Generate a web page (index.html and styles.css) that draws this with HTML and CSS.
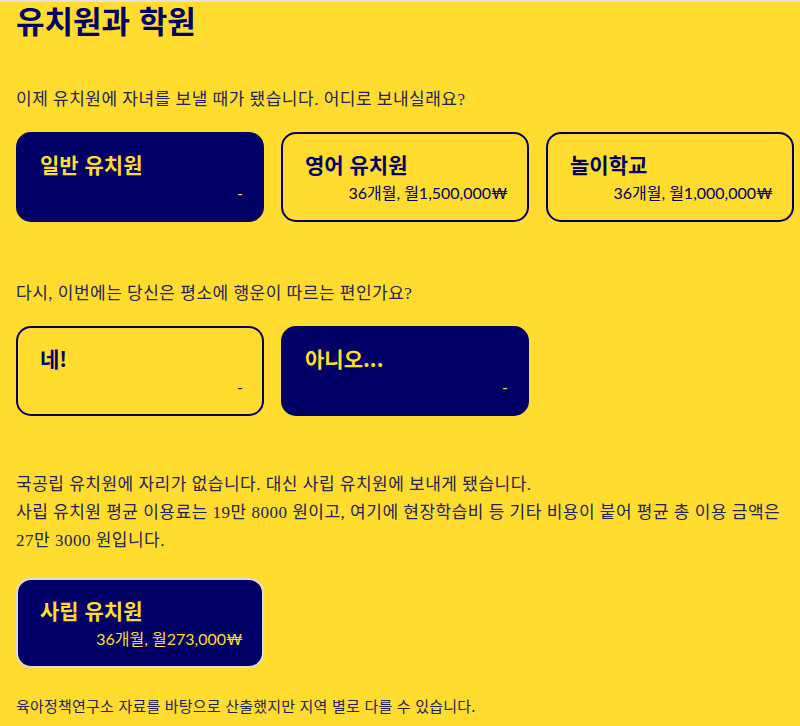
FILE: index.html
```html
<!DOCTYPE html>
<html lang="ko">

<head>
    <meta charset="UTF-8">
    <meta name="viewport" content="width=device-width, initial-scale=1">
    <title>유치원과 학원</title>
    <link rel="stylesheet" href="styles.css">
</head>

<body>
    <div class="pagina">
        <h1 class="titulo">유치원과 학원</h1>

        <p class="pergunta">이제 유치원에 자녀를 보낼 때가 됐습니다. 어디로 보내실래요?</p>
        <div class="opcoes">
            <div class="opcao escolhida">
                <span class="opcao-nome">일반 유치원</span>
                <span class="opcao-valor">-</span>
            </div>
            <div class="opcao">
                <span class="opcao-nome">영어 유치원</span>
                <span class="opcao-valor">36개월, 월1,500,000₩</span>
            </div>
            <div class="opcao">
                <span class="opcao-nome">놀이학교</span>
                <span class="opcao-valor">36개월, 월1,000,000₩</span>
            </div>
        </div>

        <p class="pergunta">다시, 이번에는 당신은 평소에 행운이 따르는 편인가요?</p>
        <div class="opcoes">
            <div class="opcao">
                <span class="opcao-nome">네!</span>
                <span class="opcao-valor">-</span>
            </div>
            <div class="opcao escolhida">
                <span class="opcao-nome">아니오...</span>
                <span class="opcao-valor">-</span>
            </div>
        </div>

        <p class="resultado">국공립 유치원에 자리가 없습니다. 대신 사립 유치원에 보내게 됐습니다.<br>사립 유치원 평균 이용료는 19만 8000 원이고, 여기에 현장학습비 등 기타 비용이 붙어 평균 총 이용 금액은 27만 3000 원입니다.</p>
        <div class="opcoes">
            <div class="opcao final">
                <span class="opcao-nome">사립 유치원</span>
                <span class="opcao-valor">36개월, 월273,000₩</span>
            </div>
        </div>

        <p class="fonte">육아정책연구소 자료를 바탕으로 산출했지만 지역 별로 다를 수 있습니다.</p>
    </div>
</body>

</html>
```

FILE: styles.css
```css
* {
    margin: 0;
    padding: 0;
    box-sizing: border-box;
}

html,
body {
    background-color: #ffdc2e;
}

body {
    border-top: 2px solid #e2e2e2;
    color: #000066;
    font-family: "Noto Sans CJK KR", sans-serif;
}

.pagina {
    width: 794px;
    padding-left: 16px;
}

.titulo {
    font-size: 31px;
    font-weight: 700;
    line-height: 36px;
}

.pergunta,
.resultado {
    font-family: "Liberation Serif", "Noto Sans CJK KR", serif;
    font-size: 17px;
    letter-spacing: 0.5px;
    line-height: 28px;
    color: #24245a;
}

.pergunta {
    margin-top: 48px;
    margin-bottom: 18px;
}

.opcoes {
    display: grid;
    grid-template-columns: repeat(3, 248px);
    gap: 17px;
}

.opcao {
    display: flex;
    flex-direction: column;
    height: 90px;
    padding: 15px 19px 0 22px;
    border: 2px solid #000066;
    border-radius: 15px;
    color: #000066;
}

.opcao-nome {
    font-size: 21px;
    font-weight: 700;
    line-height: 30px;
}

.opcao-valor {
    margin-top: 2px;
    font-family: Lato, "Noto Sans CJK KR", sans-serif;
    font-size: 16px;
    line-height: 24px;
    text-align: right;
}

.escolhida,
.final {
    background-color: #000066;
    color: #ffdc2e;
}

.final {
    border-color: #dcdcdc;
}

.opcoes + .pergunta {
    margin-top: 58px;
}

.resultado {
    margin-top: 55px;
    margin-bottom: 23px;
}

.fonte {
    margin-top: 28px;
    font-size: 15px;
    letter-spacing: 0.2px;
    line-height: 20px;
    color: #24245a;
}
```
